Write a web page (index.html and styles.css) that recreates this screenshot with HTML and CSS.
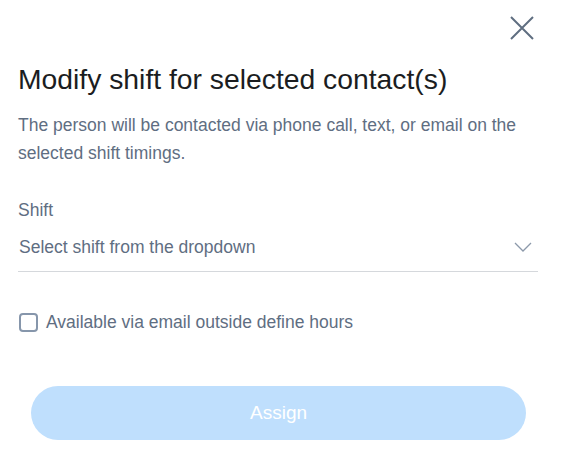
FILE: index.html
```html
<!DOCTYPE html>
<html>
<head>
<meta charset="utf-8">
<link rel="stylesheet" href="styles.css">
</head>
<body>
<div class="dialog">
  <div class="top">
    <button class="close" aria-label="Close">
      <svg width="24" height="24" viewBox="0 0 24 24"><path d="M1 1 L23 23 M23 1 L1 23" stroke="#5f6e80" stroke-width="2" fill="none"/></svg>
    </button>
  </div>
  <h1 class="title">Modify shift for selected contact(s)</h1>
  <p class="desc">The person will be contacted via phone call, text, or email on the selected shift timings.</p>
  <div class="field">
    <div class="label">Shift</div>
    <div class="select">
      <span>Select shift from the dropdown</span>
      <svg width="18" height="10" viewBox="0 0 18 10"><path d="M1 1 L9 9 L17 1" stroke="#8c99aa" stroke-width="1.3" fill="none"/></svg>
    </div>
  </div>
  <label class="check">
    <span class="box"></span>
    <span>Available via email outside define hours</span>
  </label>
  <div class="actions">
    <button class="assign">Assign</button>
  </div>
</div>
</body>
</html>
```
FILE: styles.css
```css
html, body { margin: 0; padding: 0; background: #fff; }
body { font-family: "Liberation Sans", Arial, sans-serif; }
.dialog { padding: 16px 24px 0 18px; display: flex; flex-direction: column; }
.top { display: flex; justify-content: flex-end; padding-right: 4px; }
.close { border: 0; background: none; padding: 0; width: 24px; height: 24px; cursor: pointer; display: block; }
.close svg { display: block; }
.title { margin: 22px 0 0; font-size: 28.3px; font-weight: 400; color: #1b1d21; line-height: 34px; }
.desc { margin: 15px 0 0; font-size: 17.5px; line-height: 28px; color: #5f6e82; }
.field { margin-top: 33px; }
.label { font-size: 17.5px; color: #5f6e82; line-height: 20px; }
.select { margin-top: 17px; display: flex; justify-content: space-between; align-items: center; border-bottom: 1px solid #d5d8dc; padding: 0 6px 14px 1px; font-size: 17.5px; color: #5f6e82; line-height: 20px; }
.check { margin-top: 40px; display: flex; align-items: center; gap: 8px; font-size: 17.5px; color: #5f6e82; line-height: 20px; }
.box { width: 15px; height: 15px; border: 2px solid #8696ab; border-radius: 4px; margin-left: 1px; }
.actions { margin-top: 54px; padding-left: 13px; padding-right: 12px; }
.assign { width: 100%; height: 54px; border: 0; border-radius: 27px; background: #bfdffd; color: #fff; font-family: "Liberation Sans", Arial, sans-serif; font-size: 19px; }
```
